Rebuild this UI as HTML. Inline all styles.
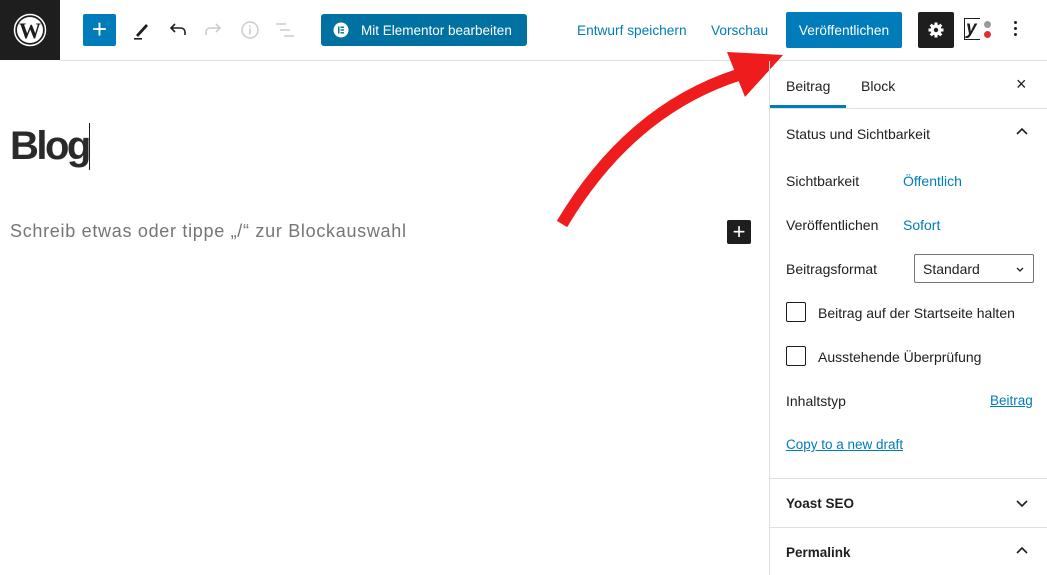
<!DOCTYPE html>
<html><head><meta charset="utf-8"><style>
*{box-sizing:border-box;margin:0;padding:0}
body{width:1047px;height:575px;overflow:hidden;background:#fff;font-family:"Liberation Sans",Arial,sans-serif;color:#1e1e1e;position:relative;font-size:14px}
.a{position:absolute;white-space:nowrap}
.blue{color:#007cba}
.hr{position:absolute;height:1px;background:#e0e0e0}
</style></head><body>
<div class="a" style="left:0;top:0;width:60px;height:60px;background:#1e1e1e"></div>
<svg class="a" style="left:13px;top:13px" width="34" height="34" viewBox="0 0 34 34"><circle cx="17" cy="17" r="15.5" fill="none" stroke="#fff" stroke-width="1.5"/><circle cx="17" cy="17" r="13" fill="#fff"/><text x="17" y="25" text-anchor="middle" font-family="Liberation Serif" font-weight="bold" font-size="22" fill="#1e1e1e">W</text></svg>
<div class="hr" style="left:60px;top:60px;width:987px"></div>
<div class="a" style="left:83px;top:14px;width:33px;height:32px;background:#007cba;border-radius:2px;color:#fff;font-size:26px;line-height:30px;text-align:center">+</div>
<svg class="a" style="left:130px;top:18px" width="24" height="24" viewBox="0 0 24 24"><path d="M6 17 L16 6 L18 8 L8 19Z" fill="#1e1e1e"/><rect x="4" y="20" width="8" height="1.6" fill="#1e1e1e"/></svg>
<svg class="a" style="left:166px;top:18px" width="24" height="24" viewBox="0 0 24 24"><path d="M5 10 H15 A4 4 0 0 1 19 14 V17 M9 6 L5 10 L9 14" fill="none" stroke="#1e1e1e" stroke-width="1.6"/></svg>
<svg class="a" style="left:201px;top:18px" width="24" height="24" viewBox="0 0 24 24"><path d="M19 10 H9 A4 4 0 0 0 5 14 V17 M15 6 L19 10 L15 14" fill="none" stroke="#ccc" stroke-width="1.6"/></svg>
<svg class="a" style="left:238px;top:18px" width="24" height="24" viewBox="0 0 24 24"><circle cx="12" cy="12" r="8" fill="none" stroke="#ccc" stroke-width="1.5"/><rect x="11.2" y="10.5" width="1.6" height="6" fill="#ccc"/><rect x="11.2" y="7.5" width="1.6" height="1.6" fill="#ccc"/></svg>
<svg class="a" style="left:273px;top:18px" width="24" height="24" viewBox="0 0 24 24"><path d="M3 6h10M7 12h10M11 18h10" stroke="#ccc" stroke-width="1.6"/></svg>
<div class="a" style="left:321px;top:14px;width:206px;height:32px;background:#0071a1;border-radius:3px;color:#fff;font-size:13.5px;line-height:34px;padding-left:40px">Mit Elementor bearbeiten</div>
<svg class="a" style="left:333px;top:22px" width="16" height="16" viewBox="0 0 16 16"><circle cx="8" cy="8" r="7.5" fill="#fff"/><rect x="5" y="4.5" width="1.5" height="7" fill="#0071a1"/><rect x="7.5" y="4.5" width="3.5" height="1.4" fill="#0071a1"/><rect x="7.5" y="7.3" width="3.5" height="1.4" fill="#0071a1"/><rect x="7.5" y="10.1" width="3.5" height="1.4" fill="#0071a1"/></svg>
<div class="a blue" style="left:577px;top:23px;font-size:13.7px">Entwurf speichern</div>
<div class="a blue" style="left:711px;top:23px;font-size:13.7px">Vorschau</div>
<div class="a" style="left:786px;top:12px;width:116px;height:36px;background:#007cba;border-radius:2px;color:#fff;line-height:37px;text-align:center;font-size:13.7px">Veröffentlichen</div>
<div class="a" style="left:918px;top:12px;width:36px;height:36px;background:#1e1e1e;border-radius:2px"></div>
<svg class="a" style="left:926px;top:20px" width="20" height="20" viewBox="0 0 20 20"><g fill="#fff"><circle cx="10" cy="10" r="5.5"/><rect x="8.5" y="2.5" width="3" height="15"/><rect x="2.5" y="8.5" width="15" height="3"/><rect x="8.5" y="2.5" width="3" height="15" transform="rotate(45 10 10)"/><rect x="8.5" y="2.5" width="3" height="15" transform="rotate(-45 10 10)"/></g><circle cx="10" cy="10" r="2.2" fill="#1e1e1e"/></svg>
<div class="a" style="left:964px;top:18px;font-size:19px;font-weight:bold;font-style:italic;border:1.5px solid #1e1e1e;border-right:none;height:22px;line-height:19px;padding:0 3px 0 1px">y</div>
<div class="a" style="left:984px;top:21px;width:7px;height:7px;border-radius:50%;background:#999"></div>
<div class="a" style="left:984px;top:31px;width:7px;height:7px;border-radius:50%;background:#dc3232"></div>
<div class="a" style="left:1014px;top:21px;width:3px;height:3px;border-radius:50%;background:#1e1e1e;box-shadow:0 6px 0 #1e1e1e,0 12px 0 #1e1e1e"></div>

<div class="a" style="left:10px;top:124px;font-size:40px;font-weight:bold;color:#2a2a2a;letter-spacing:-2.5px">Blog</div>
<div class="a" style="left:89px;top:123px;width:1px;height:47px;background:#1e1e1e"></div>
<div class="a" style="left:10px;top:221px;font-size:18px;color:#757575;letter-spacing:0.7px">Schreib etwas oder tippe „/“ zur Blockauswahl</div>
<div class="a" style="left:727px;top:220px;width:24px;height:24px;background:#1e1e1e;border-radius:2px;color:#fff;font-size:22px;line-height:23px;text-align:center">+</div>

<svg class="a" style="left:0;top:0" width="1047" height="575"><path d="M562 224 Q630 110 738 75" fill="none" stroke="#ee1c1c" stroke-width="12"/><path d="M727 52 L783 55 L745 97Z" fill="#ee1c1c"/></svg>

<div class="a" style="left:769px;top:61px;width:1px;height:514px;background:#e0e0e0"></div>
<div class="a" style="left:786px;top:78px">Beitrag</div>
<div class="a" style="left:861px;top:78px">Block</div>
<div class="a" style="left:1016px;top:74px;font-size:18px">×</div>
<div class="a" style="left:770px;top:105px;width:76px;height:3px;background:#007cba"></div>
<div class="hr" style="left:770px;top:108px;width:277px"></div>
<div class="a" style="left:786px;top:126px">Status und Sichtbarkeit</div>
<svg class="a" style="left:1014px;top:124px" width="16" height="16"><path d="M3 10 L8 5 L13 10" fill="none" stroke="#1e1e1e" stroke-width="1.6"/></svg>
<div class="a" style="left:786px;top:173px">Sichtbarkeit</div>
<div class="a blue" style="left:903px;top:173px">Öffentlich</div>
<div class="a" style="left:786px;top:217px">Veröffentlichen</div>
<div class="a blue" style="left:903px;top:217px">Sofort</div>
<div class="a" style="left:786px;top:261px">Beitragsformat</div>
<div class="a" style="left:914px;top:254px;width:120px;height:29px;border:1px solid #757575;border-radius:2px;padding:6px 0 0 8px">Standard</div>
<svg class="a" style="left:1014px;top:263px" width="12" height="12"><path d="M3 5 L6 8 L9 5" fill="none" stroke="#1e1e1e" stroke-width="1.3"/></svg>
<div class="a" style="left:786px;top:302px;width:20px;height:20px;border:1px solid #1e1e1e;border-radius:2px"></div>
<div class="a" style="left:818px;top:305px">Beitrag auf der Startseite halten</div>
<div class="a" style="left:786px;top:346px;width:20px;height:20px;border:1px solid #1e1e1e;border-radius:2px"></div>
<div class="a" style="left:818px;top:349px">Ausstehende Überprüfung</div>
<div class="a" style="left:786px;top:393px">Inhaltstyp</div>
<div class="a blue" style="left:990px;top:393px;text-decoration:underline;font-size:13.5px">Beitrag</div>
<div class="a blue" style="left:786px;top:437px;text-decoration:underline;font-size:13.5px">Copy to a new draft</div>
<div class="hr" style="left:770px;top:478px;width:277px"></div>
<div class="a" style="left:786px;top:496px;font-weight:bold;font-size:13.5px">Yoast SEO</div>
<svg class="a" style="left:1014px;top:495px" width="16" height="16"><path d="M3 6 L8 11 L13 6" fill="none" stroke="#1e1e1e" stroke-width="1.6"/></svg>
<div class="hr" style="left:770px;top:527px;width:277px"></div>
<div class="a" style="left:786px;top:545px;font-weight:bold;font-size:13.5px">Permalink</div>
<svg class="a" style="left:1014px;top:543px" width="16" height="16"><path d="M3 10 L8 5 L13 10" fill="none" stroke="#1e1e1e" stroke-width="1.6"/></svg>
</body></html>
